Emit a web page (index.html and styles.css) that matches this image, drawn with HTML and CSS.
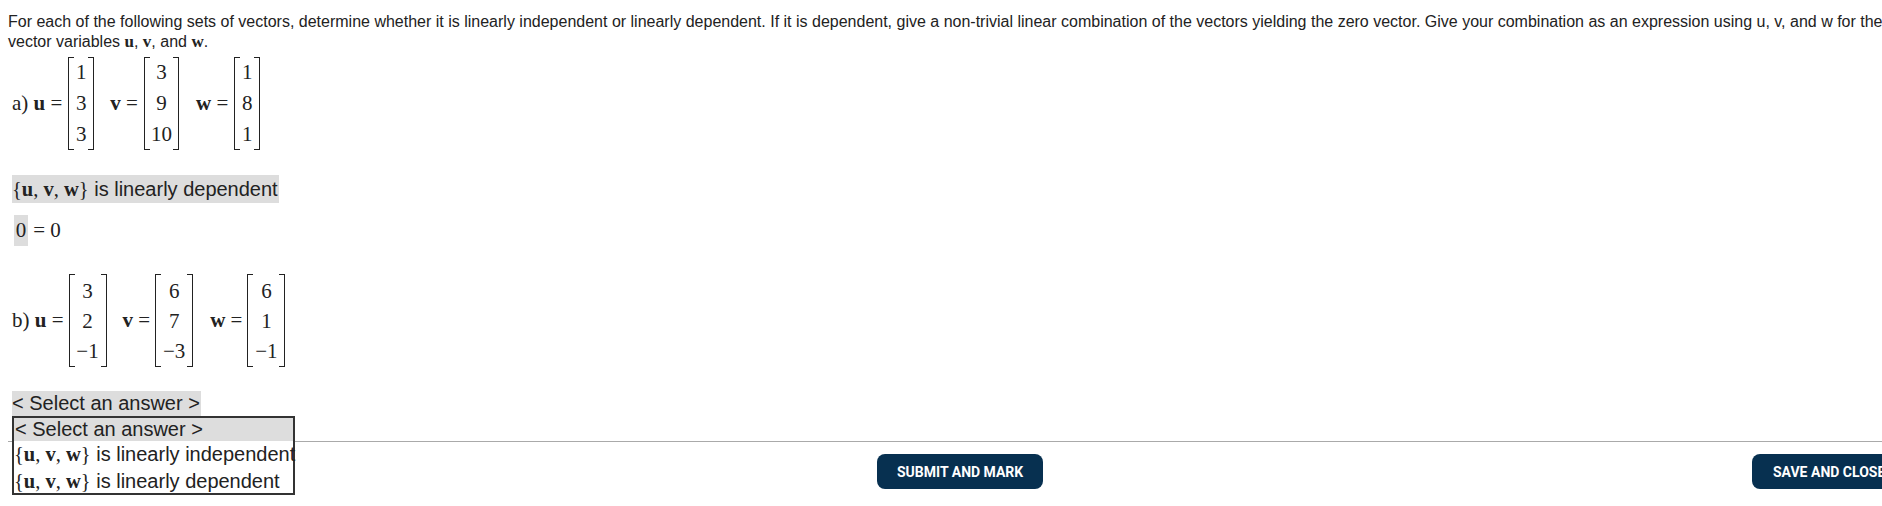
FILE: index.html
```html
<!DOCTYPE html>
<html lang="en">
<head>
    <meta charset="UTF-8">
    <title>Linear independence</title>
    <link rel="stylesheet" href="styles.css">
</head>
<body>
    <div class="page">
        <p class="question">For each of the following sets of vectors, determine whether it is linearly independent or linearly dependent. If it is dependent, give a non-trivial linear combination of the vectors yielding the zero vector. Give your combination as an expression using u, v, and w for the<br>vector variables <b class="math-bold">u</b>, <b class="math-bold">v</b>, and <b class="math-bold">w</b>.</p>

        <div class="vectors vectors-a">
            <span class="math">a) <b>u</b> =</span>
            <div class="matrix matrix-narrow">
                <span class="cell">1</span><span class="cell">3</span><span class="cell">3</span>
            </div>
            <span class="math label-v"><b>v</b> =</span>
            <div class="matrix matrix-wide">
                <span class="cell">3</span><span class="cell">9</span><span class="cell">10</span>
            </div>
            <span class="math label-w"><b>w</b> =</span>
            <div class="matrix matrix-narrow">
                <span class="cell">1</span><span class="cell">8</span><span class="cell">1</span>
            </div>
        </div>

        <div class="answer-row">
            <span class="answer"><span class="math-set">{<b>u</b>, <b>v</b>, <b>w</b>}</span> is linearly dependent</span>
        </div>
        <div class="equation">
            <span class="zero math">0</span><span class="math">&nbsp;= 0</span>
        </div>

        <div class="vectors vectors-b">
            <span class="math">b) <b>u</b> =</span>
            <div class="matrix matrix-tall">
                <span class="cell">3</span><span class="cell">2</span><span class="cell">&minus;1</span>
            </div>
            <span class="math label-v"><b>v</b> =</span>
            <div class="matrix matrix-tall">
                <span class="cell">6</span><span class="cell">7</span><span class="cell">&minus;3</span>
            </div>
            <span class="math label-w"><b>w</b> =</span>
            <div class="matrix matrix-tall">
                <span class="cell">6</span><span class="cell">1</span><span class="cell">&minus;1</span>
            </div>
        </div>

        <div class="select-wrap">
            <span class="select-value">&lt; Select an answer &gt;</span>
            <ul class="select-menu">
                <li class="selected">&lt; Select an answer &gt;</li>
                <li><span class="math-set">{<b>u</b>, <b>v</b>, <b>w</b>}</span> is linearly independent</li>
                <li><span class="math-set">{<b>u</b>, <b>v</b>, <b>w</b>}</span> is linearly dependent</li>
            </ul>
        </div>

        <div class="footer">
            <button class="btn btn-submit">SUBMIT AND MARK</button>
            <button class="btn btn-save">SAVE AND CLOSE</button>
        </div>
    </div>
</body>
</html>
```

FILE: styles.css
```css
html, body {
    overflow: hidden;
}

body {
    margin: 0;
    height: 506px;
    background: #fff;
    color: #222;
    font-family: "Liberation Sans", Arial, sans-serif;
}

.page {
    width: 1960px;
    padding: 12px 0 0 8px;
}

.question {
    margin: 0;
    font-size: 16px;
    line-height: 20px;
    white-space: nowrap;
}

.math-bold,
.math,
.math-set {
    font-family: "Liberation Serif", "Times New Roman", serif;
}

.math-bold {
    font-size: 17px;
}

.math {
    font-size: 21px;
}

.math-set {
    font-size: 20.5px;
}

.vectors {
    display: flex;
    align-items: center;
    height: 93px;
    margin-left: 4px;
}

.vectors-a {
    margin-top: 5px;
}

.vectors-b {
    margin-top: 28px;
}

.label-v {
    margin-left: 16px;
}

.label-w {
    margin-left: 17px;
}

.vectors-a .matrix {
    margin-left: 6px;
}

.vectors-b .matrix {
    margin-left: 5px;
}

.matrix {
    display: flex;
    flex-direction: column;
    justify-content: space-around;
    position: relative;
    height: 93px;
    box-sizing: border-box;
    border-left: 1px solid #222;
    border-right: 1px solid #222;
    font-family: "Liberation Serif", "Times New Roman", serif;
    font-size: 21px;
    text-align: center;
}

.matrix::before,
.matrix::after {
    content: "";
    position: absolute;
    top: 0;
    bottom: 0;
    width: 5px;
    border-top: 1px solid #222;
    border-bottom: 1px solid #222;
}

.matrix::before {
    left: 0;
}

.matrix::after {
    right: 0;
}

.matrix-narrow {
    width: 26px;
}

.matrix-wide {
    width: 35px;
}

.matrix-tall {
    width: 38px;
    padding-top: 2px;
}

.answer-row {
    margin-top: 25px;
    margin-left: 4px;
    display: flex;
}

.answer {
    background: #ddd;
    font-size: 20px;
    line-height: 28px;
    padding-right: 1px;
}

.equation {
    display: flex;
    align-items: center;
    margin-top: 12px;
    margin-left: 6px;
    height: 31px;
}

.zero {
    display: flex;
    align-items: center;
    justify-content: center;
    width: 14px;
    height: 31px;
    background: #ddd;
}

.select-wrap {
    position: relative;
    width: fit-content;
    margin-top: 24px;
    margin-left: 4px;
}

.select-value {
    display: block;
    background: #ddd;
    font-size: 20px;
    line-height: 25px;
    padding-right: 1px;
}

.select-menu {
    position: absolute;
    top: 100%;
    left: 0;
    z-index: 2;
    width: 279px;
    margin: 0;
    padding: 0;
    list-style: none;
    background: #fff;
    border: 2px solid #333;
    font-size: 20px;
    white-space: nowrap;
}

.select-menu li {
    height: 27px;
    line-height: 27px;
}

.select-menu li:last-child {
    height: 25px;
}

.select-menu li.selected {
    height: 23px;
    line-height: 23px;
    padding-left: 1px;
    background: #ddd;
}

.footer {
    display: grid;
    grid-template-columns: 869px 875px 1fr;
    margin-top: 25px;
    padding-top: 12px;
    border-top: 1px solid #aaa;
}

.btn {
    height: 35px;
    padding: 0 20px;
    border: none;
    border-radius: 8px;
    background: #073050;
    color: #fff;
    font-family: "Roboto", sans-serif;
    font-size: 14px;
    font-weight: 700;
    white-space: nowrap;
    cursor: pointer;
}

.btn-submit {
    grid-column: 2;
    width: 166px;
}

.btn-save {
    grid-column: 3;
    justify-self: start;
    padding: 0 21px;
}
```
